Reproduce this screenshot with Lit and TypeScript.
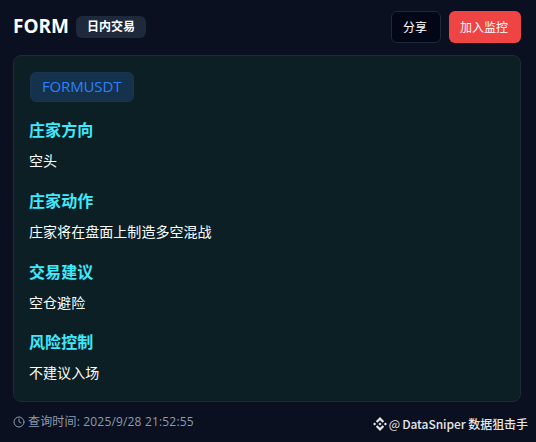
import {LitElement, html, css, svg} from 'lit';
import {customElement, property, state} from 'lit/decorators.js';

interface Section {
  title: string;
  text: string;
}

const clockIcon = svg`
  <circle cx="12" cy="12" r="10"></circle>
  <polyline points="12 6 12 12 16 14"></polyline>
`;

@customElement('signal-section')
export class SignalSection extends LitElement {
  @property() heading = '';

  static styles = css`
    :host {
      display: block;
    }

    .heading {
      margin: 0 0 8px;
      color: #3eeafc;
      font-size: 16px;
      font-weight: 700;
      letter-spacing: 0.1px;
      line-height: 24px;
    }

    .text {
      margin: 0;
      color: #fff;
      font-size: 14px;
      letter-spacing: 0.05px;
      line-height: 22.75px;
    }
  `;

  render() {
    return html`
      <h3 class="heading">${this.heading}</h3>
      <p class="text"><slot></slot></p>
    `;
  }
}

@customElement('app-root')
export class AppRoot extends LitElement {
  @state() private _sections: Section[] = [
    {title: '庄家方向', text: '空头'},
    {title: '庄家动作', text: '庄家将在盘面上制造多空混战'},
    {title: '交易建议', text: '空仓避险'},
    {title: '风险控制', text: '不建议入场'},
  ];

  static styles = css`
    :host {
      position: relative;
      display: block;
      box-sizing: border-box;
      width: 536px;
      height: 442px;
      padding: 11px 15px 0 13px;
      overflow: hidden;
      background: #0a101f;
      color: #fff;
      font-family: 'Open Sans', 'Noto Sans CJK SC', sans-serif;
    }

    .header {
      display: flex;
      align-items: center;
      justify-content: space-between;
      height: 32px;
      margin-bottom: 12px;
    }

    .title,
    .actions {
      display: flex;
      align-items: center;
      gap: 8px;
    }

    .title {
      gap: 7px;
    }

    .symbol {
      margin: 0;
      padding-bottom: 2px;
      font-size: 19px;
      font-weight: 700;
      line-height: 28px;
    }

    .badge {
      box-sizing: border-box;
      height: 22px;
      padding: 0 11px;
      border-radius: 6px;
      background: #1e293b;
      font-size: 12px;
      font-weight: 700;
      line-height: 21px;
    }

    .button {
      box-sizing: border-box;
      height: 32px;
      padding: 0 13px 0 11px;
      border: 1px solid #1e293b;
      border-radius: 6px;
      background: #020617;
      color: inherit;
      font: inherit;
      font-size: 12px;
      line-height: 29px;
      white-space: nowrap;
    }

    .button--danger {
      border: none;
      background: #ef4444;
    }

    .card {
      box-sizing: border-box;
      height: 347px;
      padding: 16px 15px;
      border: 1px solid #1c2b38;
      border-radius: 8px;
      background: #0c1f25;
    }

    .pair {
      box-sizing: border-box;
      display: inline-block;
      height: 30px;
      margin-left: 1px;
      padding: 0 12px 0 11px;
      border: 1px solid #1b344f;
      border-radius: 6px;
      background: #15324d;
      color: #2f80fa;
      font-size: 15px;
      letter-spacing: -0.15px;
      line-height: 26px;
      vertical-align: top;
    }

    .sections {
      display: flex;
      flex-direction: column;
      gap: 16px;
      margin-top: 16px;
    }

    .footer {
      display: flex;
      align-items: center;
      gap: 3px;
      height: 16px;
      margin-top: 12px;
      color: #8c9bb1;
      font-size: 12px;
      line-height: 16px;
    }

    .time {
      letter-spacing: 0.17px;
    }

    .clock {
      width: 12px;
      height: 12px;
      fill: none;
      stroke: currentColor;
      stroke-width: 2;
      stroke-linecap: round;
      stroke-linejoin: round;
    }

    .watermark {
      position: absolute;
      right: 8px;
      bottom: 10px;
      display: flex;
      align-items: center;
      gap: 2px;
      color: #e5e6e9;
      font-family: 'Noto Sans CJK SC', sans-serif;
      font-size: 12px;
      line-height: 16px;
      white-space: nowrap;
    }

    .handle {
      font-weight: 500;
      letter-spacing: -0.05px;
    }

    .watermark-logo {
      width: 14px;
      height: 14px;
      fill: currentColor;
    }
  `;

  render() {
    return html`
      <header class="header">
        <div class="title">
          <h1 class="symbol">FORM</h1>
          <span class="badge">日内交易</span>
        </div>
        <div class="actions">
          <button class="button">分享</button>
          <button class="button button--danger">加入监控</button>
        </div>
      </header>
      <main class="card">
        <span class="pair">FORMUSDT</span>
        <div class="sections">
          ${this._sections.map(
            (section) => html`
              <signal-section .heading=${section.title}
                >${section.text}</signal-section
              >
            `
          )}
        </div>
      </main>
      <footer class="footer">
        <svg class="clock" viewBox="0 0 24 24">${clockIcon}</svg>
        <span class="time">查询时间: 2025/9/28 21:52:55</span>
      </footer>
      <div class="watermark">
        <svg class="watermark-logo" viewBox="0 0 24 24">
          <path
            d="M12 0 19.2 7.2 16.5 9.9 12 5.4 7.5 9.9 4.8 7.2zM0 12l2.7-2.7L5.4 12l-2.7 2.7zM12 9.3l2.7 2.7-2.7 2.7L9.3 12zM18.6 12l2.7-2.7L24 12l-2.7 2.7zM12 24l-7.2-7.2 2.7-2.7 4.5 4.5 4.5-4.5 2.7 2.7z"
          ></path>
        </svg>
        <span>@</span><span class="handle">DataSniper 数据狙击手</span>
      </div>
    `;
  }
}
